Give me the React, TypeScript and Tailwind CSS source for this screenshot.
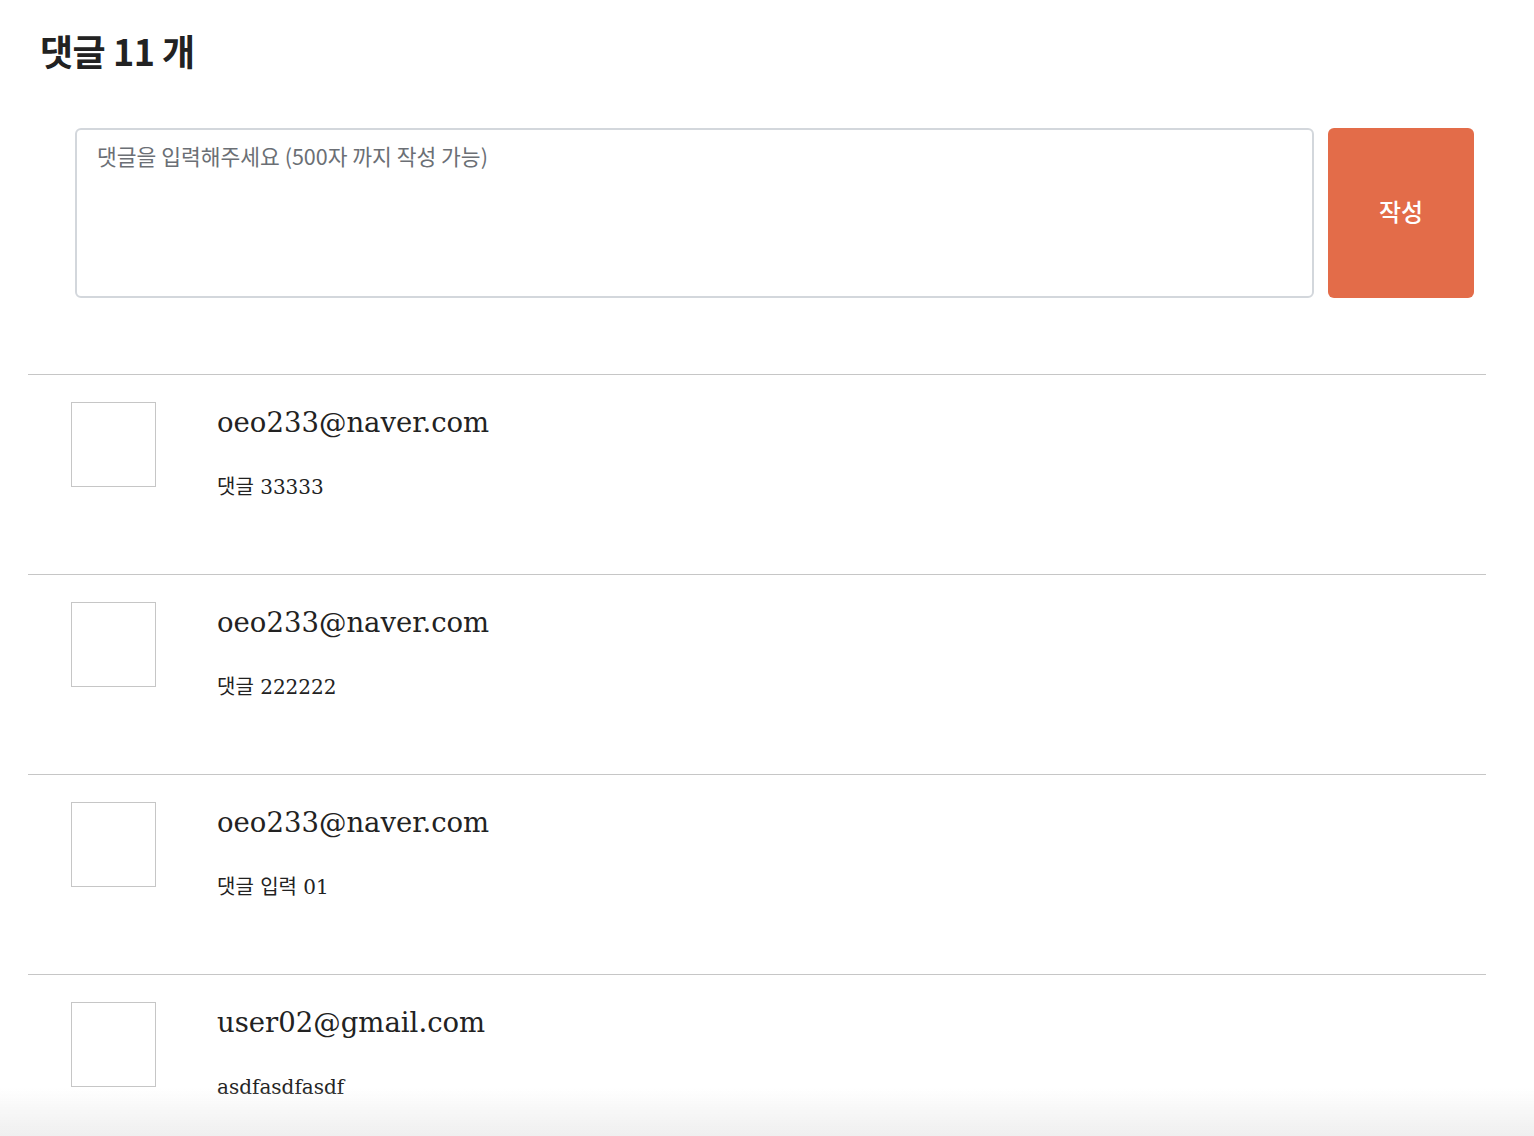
import React from 'react';

interface Comment {
  id: number;
  email: string;
  content: string;
}

const comments: Comment[] = [
  { id: 1, email: 'oeo233@naver.com', content: '댓글 33333' },
  { id: 2, email: 'oeo233@naver.com', content: '댓글 222222' },
  { id: 3, email: 'oeo233@naver.com', content: '댓글 입력 01' },
  { id: 4, email: 'user02@gmail.com', content: 'asdfasdfasdf' },
];

const sans = 'font-["Noto_Sans_CJK_KR","Noto_Sans",sans-serif]';

const CommentItem: React.FC<{ comment: Comment }> = ({ comment }) => (
  <li className="border-t border-[#c6c6c6] h-[200px] pt-[27px] flex">
    {/* 프로필 이미지 자리 */}
    <div className="ml-[43px] w-[85px] h-[85px] border border-[#c6c6c6] shrink-0"></div>
    <div className="ml-[61px] font-['DejaVu_Serif','Noto_Sans_CJK_KR',serif] text-[#222222]">
      <p className="text-[27.5px] leading-[40px]">{comment.email}</p>
      <p className="text-[20px] leading-[28px] mt-[31px]">{comment.content}</p>
    </div>
  </li>
);

export default function App() {
  return (
    <div className={`min-h-screen bg-white ${sans}`}>
      <div className="px-7 pt-[22px] w-[1514px]">
        <h2 className="ml-3 text-[36px] leading-[56px] font-semibold text-[#222222] tracking-[-0.5px]">댓글 11 개</h2>

        {/* 댓글 작성 폼 */}
        <div className="flex gap-[14px] ml-[47px] mr-3 mt-[50px]">
          <textarea
            className="flex-1 h-[170px] border-2 border-[#d3d7dc] rounded-md px-5 py-[11px] text-[21.5px] leading-[30px] resize-none outline-none placeholder:text-[#6b6f75]"
            placeholder="댓글을 입력해주세요 (500자 까지 작성 가능)"
          />
          <button className="w-[146px] h-[170px] bg-[#e36c49] rounded-md text-white text-[24px] font-medium pb-[4px]">작성</button>
        </div>

        {/* 댓글 목록 */}
        <ul className="mt-[76px]">
          {comments.map((c) => (
            <CommentItem key={c.id} comment={c} />
          ))}
        </ul>
      </div>
      <div className="fixed left-0 right-0 bottom-0 h-[48px] bg-gradient-to-b from-white/0 to-[#efefef] pointer-events-none"></div>
    </div>
  );
}
